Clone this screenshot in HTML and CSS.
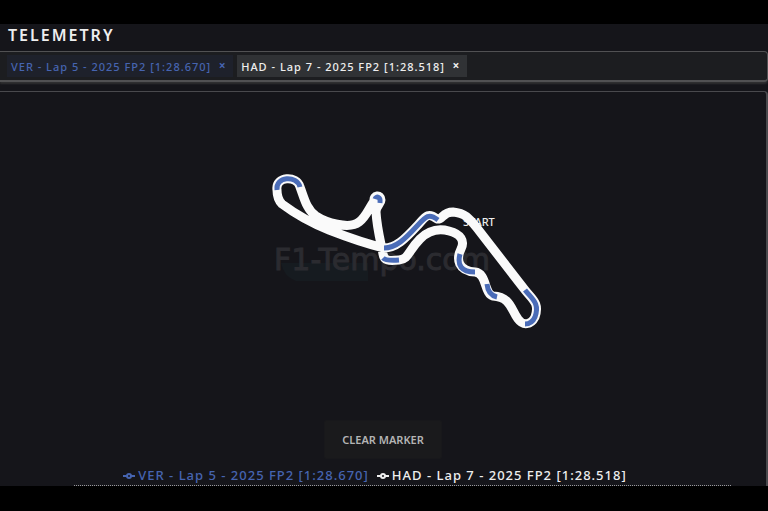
FILE: index.html
```html
<!DOCTYPE html>
<html lang="en">
<head>
<meta charset="utf-8">
<meta name="viewport" content="width=device-width, initial-scale=1">
<title>Telemetry</title>
<link rel="stylesheet" href="styles.css">
</head>
<body>
<main class="app">
  <h1 class="title">TELEMETRY</h1>
  <div class="laps">
    <span class="chip chip-ver">VER - Lap 5 - 2025 FP2 [1:28.670]<button class="remove" type="button" aria-label="Remove VER lap">×</button></span>
    <span class="chip chip-had">HAD - Lap 7 - 2025 FP2 [1:28.518]<button class="remove" type="button" aria-label="Remove HAD lap">×</button></span>
  </div>
  <section class="panel">
    <svg class="track" viewBox="0 92 766 328" role="img" aria-label="Track map">
      <path class="shade" d="M281 263H368V281H296Q284 277 281 263Z"/>
      <text class="watermark" x="382" y="270" text-anchor="middle">F1-Tempo.com</text>
      <text class="start" x="463" y="226">START</text>
      <path class="road" d="M277 190C275 176 297 175 300 187C304 197 306 209 316 216C325 222 349 230 359 222C366 217 369 208 374 201C373 195 381 194 381 200C381 204 376 206 376 212C377 229 381 243 383 254C384 261 389 261 399 260C409 259 408 251 420 239C428 231 438 228 449 231C461 234 465 241 461 249C456 259 458 271 475 272C487 273 484 294 493 296C511 297 511 310 518 319C523 326 531 325 535 317C540 303 532 299 525 290L477 228C469 218 465 213 453 212C442 212 443 220 437 219C428 212 426 216 417 226C405 239 396 248 384 248C367 244 347 237 329 230C311 223 294 213 282 204C278 200 277 195 277 190Z"/>
      <path class="sector" d="M277 190C275 176 297 175 300 187"/>
      <path class="sector" d="M375 199C376 196 381 196 380 203"/>
      <path class="sector" d="M383 258Q386 261 399 260"/>
      <path class="sector" d="M384 248C396 248 405 239 417 226C426 216 429 213 438 220"/>
      <path class="sector" d="M460 254C457 265 461 272 475 272"/>
      <path class="sector" d="M487 284Q488 295 497 297"/>
      <path class="sector" d="M525 290C532 299 540 303 535 317Q532 324 525 324"/>
    </svg>
    <button class="clear" type="button">CLEAR MARKER</button>
    <div class="legend">
      <span class="key key-ver"><svg class="mark" viewBox="0 0 12 8" aria-hidden="true"><path d="M0 4H4M8 4H12"/><circle cx="6" cy="4" r="2"/></svg>VER - Lap 5 - 2025 FP2 [1:28.670]</span>
      <span class="key key-had"><svg class="mark" viewBox="0 0 12 8" aria-hidden="true"><path d="M0 4H4M8 4H12"/><circle cx="6" cy="4" r="2"/></svg>HAD - Lap 7 - 2025 FP2 [1:28.518]</span>
    </div>
    <div class="axis"></div>
  </section>
</main>
</body>
</html>
```
FILE: styles.css
```css
* {
  box-sizing: border-box;
}

body {
  margin: 0;
  padding: 24px 0;
  background: #000;
  color: #eee;
  font-family: "Noto Sans", "Open Sans", sans-serif;
}

.app {
  background: #15151a;
}

.title {
  margin: 0;
  padding: 0 8px;
  font-size: 16px;
  line-height: 22px;
  font-weight: 600;
  letter-spacing: 2px;
}

.laps {
  display: flex;
  gap: 4px;
  margin-top: 5px;
  padding: 3px 7px;
  background: #1c1d20;
  border: 1px solid #515153;
  border-left: 0;
  border-bottom-width: 2px;
  border-radius: 0 4px 4px 0;
  box-shadow: 0 2px 2px #303032;
}

.chip {
  display: flex;
  align-items: center;
  padding: 0 4px;
  height: 22px;
  font-size: 11px;
  font-weight: 500;
  letter-spacing: 1px;
  white-space: nowrap;
}

.chip-ver {
  background: #1e212b;
  color: #4664b0;
}

.chip-had {
  background: #303235;
}

.remove {
  width: 14px;
  margin-left: 4px;
  padding: 0;
  border: 0;
  background: none;
  color: inherit;
  font: bold 12px/20px "Noto Sans", sans-serif;
}

.panel {
  display: flex;
  flex-direction: column;
  align-items: center;
  margin-top: 9px;
  border: 1px solid #49494d;
  border-width: 1px 2px 0 0;
  border-radius: 0 4px 0 0;
}

.track {
  display: block;
  width: 100%;
}

.shade {
  fill: #161b20;
}

.watermark {
  fill: #2b2b30;
  stroke: #2b2b30;
  stroke-width: 1px;
  font: 30px "DejaVu Sans", sans-serif;
}

.start {
  fill: #eee;
  font: 500 11px "Noto Sans", sans-serif;
}

.road,
.sector {
  fill: none;
  stroke-linejoin: round;
}

.road {
  stroke: #fafafa;
  stroke-width: 9px;
}

.sector {
  stroke: #4a6cb8;
  stroke-width: 5px;
}

.clear {
  height: 39px;
  padding: 0 17px;
  border: 1px solid #18181b;
  border-radius: 2px;
  background: #1a1a1c;
  color: #b4b4b4;
  font: 600 11px "Noto Sans", sans-serif;
}

.legend {
  display: flex;
  flex-wrap: wrap;
  justify-content: center;
  gap: 0 8px;
  margin-top: 6px;
  padding-right: 16px;
  font-size: 13px;
  font-weight: 500;
  line-height: 20px;
  letter-spacing: 1px;
}

.key {
  display: flex;
  align-items: center;
  gap: 3px;
}

.key-ver {
  color: #4664b0;
}

.mark {
  width: 12px;
  height: 8px;
  margin-top: 2px;
  fill: none;
  stroke: currentColor;
  stroke-width: 2px;
}

.axis {
  align-self: stretch;
  margin: 0 35px 0 74px;
  border-bottom: 1px dotted #99999d;
}
```
